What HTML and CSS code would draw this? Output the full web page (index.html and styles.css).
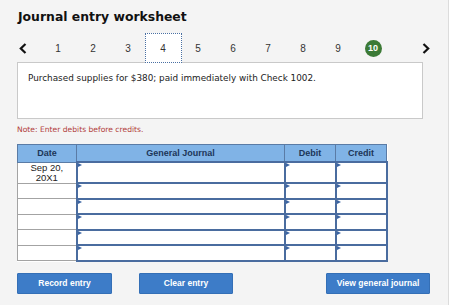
FILE: index.html
```html
<!DOCTYPE html>
<html lang="en">
<head>
<meta charset="utf-8">
<title>Journal entry worksheet</title>
<link rel="stylesheet" href="styles.css">
</head>
<body>
<div class="panel">
  <h1 class="title">Journal entry worksheet</h1>
  <nav class="pager">
    <span class="pg arrow"><svg width="8" height="11" viewBox="0 0 8 11"><polyline points="6.5,1 1.8,5.5 6.5,10" fill="none" stroke="#111" stroke-width="2.2"/></svg></span>
    <span class="pg">1</span>
    <span class="pg">2</span>
    <span class="pg">3</span>
    <span class="pg current">4</span>
    <span class="pg">5</span>
    <span class="pg">6</span>
    <span class="pg">7</span>
    <span class="pg">8</span>
    <span class="pg">9</span>
    <span class="pg"><span class="done">10</span></span>
    <span class="pg arrow next"><svg width="8" height="11" viewBox="0 0 8 11"><polyline points="1.5,1 6.2,5.5 1.5,10" fill="none" stroke="#111" stroke-width="2.2"/></svg></span>
  </nav>
  <div class="prompt">Purchased supplies for $380; paid immediately with Check 1002.</div>
  <p class="note">Note: Enter debits before credits.</p>
  <table class="journal">
    <colgroup>
      <col class="c-date"><col class="c-gj"><col class="c-dr"><col class="c-cr">
    </colgroup>
    <thead>
      <tr><th>Date</th><th>General Journal</th><th>Debit</th><th>Credit</th></tr>
    </thead>
    <tbody>
      <tr class="r1"><td class="date">Sep 20,<br>20X1</td><td class="in"></td><td class="in"></td><td class="in"></td></tr>
      <tr class="r2"><td class="date"></td><td class="in"></td><td class="in"></td><td class="in"></td></tr>
      <tr class="r2"><td class="date"></td><td class="in"></td><td class="in"></td><td class="in"></td></tr>
      <tr class="r2"><td class="date"></td><td class="in"></td><td class="in"></td><td class="in"></td></tr>
      <tr class="r2"><td class="date"></td><td class="in"></td><td class="in"></td><td class="in"></td></tr>
      <tr class="r2"><td class="date"></td><td class="in"></td><td class="in"></td><td class="in"></td></tr>
    </tbody>
  </table>
  <div class="actions">
    <button class="btn b-record">Record entry</button>
    <button class="btn b-clear">Clear entry</button>
    <button class="btn b-view">View general journal</button>
  </div>
</div>
</body>
</html>
```
FILE: styles.css
```css
html, body {
  margin: 0;
  background: #fff;
}
body {
  font-family: "Liberation Sans", Arial, sans-serif;
}
.panel {
  width: 448px;
  height: 305px;
  background: #f4f4f4;
  border-right: 1px solid #dcdcdc;
  overflow: hidden;
}
.title {
  margin: 0;
  padding: 9px 0 0 18px;
  font: bold 12.4px/16px "DejaVu Sans", Verdana, sans-serif;
  color: #111;
}
.pager {
  display: flex;
  align-items: center;
  height: 30px;
  margin-top: 8px;
  padding-left: 5.5px;
}
.pg {
  width: 35px;
  height: 30px;
  flex: none;
  display: flex;
  align-items: center;
  justify-content: center;
  font-size: 10px;
  color: #333;
}
.pg.current {
  width: 37px;
  margin: 0 -1px;
  box-sizing: border-box;
  border: 1px dotted #4a70a3;
  background: #fff;
}
.done {
  width: 17px;
  height: 17px;
  border-radius: 50%;
  background: #3c7a36;
  color: #fff;
  font-weight: bold;
  font-size: 9px;
  display: flex;
  align-items: center;
  justify-content: center;
}
.pg.next {
  margin-left: 18px;
}
.prompt {
  margin: -1px 0 0 17px;
  width: 406px;
  height: 57px;
  box-sizing: border-box;
  background: #fff;
  border: 1px solid #c9c9c9;
  padding: 10px 10px 0;
  font: 8.85px/11px "DejaVu Sans", Verdana, sans-serif;
  color: #222;
}
.note {
  margin: 6px 0 0 17px;
  font: 7.6px/10px "DejaVu Sans", Verdana, sans-serif;
  color: #b2403b;
}
.journal {
  margin: 9px 0 0 17px;
  width: 369px;
  border-collapse: collapse;
  table-layout: fixed;
  background: #fff;
}
.c-date { width: 59px; }
.c-gj { width: 208px; }
.c-dr { width: 51px; }
.c-cr { width: 51px; }
.journal th {
  height: 16px;
  padding: 0;
  background: #80b3e6;
  color: #1d3658;
  font-size: 9px;
  font-weight: bold;
  border: 1px solid #5a7ba5;
}
.journal td {
  padding: 0;
}
.journal .date {
  border: 1px solid #a3a3a3;
  text-align: center;
  font-size: 9.5px;
  line-height: 10px;
  color: #222;
}
.journal .in {
  border: 2px solid #4a6c9f;
  position: relative;
}
.journal .in::before {
  content: "";
  position: absolute;
  top: 0;
  left: 0;
  border-left: 4px solid #3b64a2;
  border-top: 2.5px solid transparent;
  border-bottom: 2.5px solid transparent;
}
.r1 { height: 21px; }
.r2 { height: 15.5px; }
.actions {
  display: flex;
  width: 413px;
  margin: 11px 0 0 17px;
}
.btn {
  height: 21px;
  padding: 0;
  background: #3d7cc8;
  border: 1px solid #346fb6;
  border-radius: 1px;
  color: #fff;
  font: bold 8.5px "Liberation Sans", Arial, sans-serif;
}
.b-record { width: 95px; }
.b-clear { width: 94px; margin-left: 27px; }
.b-view { width: 104px; margin-left: auto; }
```
